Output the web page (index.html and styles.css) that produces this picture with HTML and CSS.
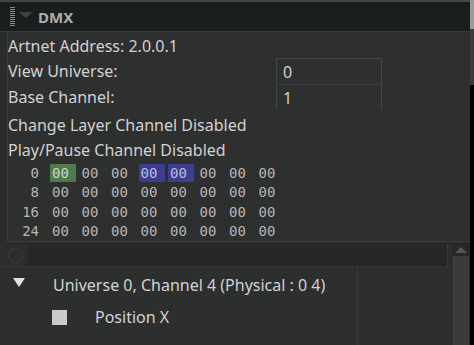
FILE: index.html
```
<!DOCTYPE html>
<html lang="en">
<head>
    <meta charset="UTF-8">
    <title>DMX</title>
    <link rel="stylesheet" href="styles.css">
</head>
<body>

<div class="window">
    <div class="main">
        <div class="header">
            <span class="grip"></span>
            <span class="caret"></span>
            <span class="title">DMX</span>
        </div>

        <div class="panel">
            <div class="row">Artnet Address: 2.0.0.1</div>
            <div class="row field-row">
                <span>View Universe:</span>
                <span class="field">0</span>
            </div>
            <div class="row field-row">
                <span>Base Channel:</span>
                <span class="field last">1</span>
            </div>
            <div class="row gap">Change Layer Channel Disabled</div>
            <div class="row">Play/Pause Channel Disabled</div>

            <div class="hex">
                <span class="lbl">0</span>
                <span class="cell sel-green">00</span><span class="cell">00</span><span class="cell">00</span><span class="cell sel-blue">00</span>
                <span class="cell sel-blue">00</span><span class="cell">00</span><span class="cell">00</span><span class="cell">00</span>
                <span class="lbl">8</span>
                <span class="cell">00</span><span class="cell">00</span><span class="cell">00</span><span class="cell">00</span>
                <span class="cell">00</span><span class="cell">00</span><span class="cell">00</span><span class="cell">00</span>
                <span class="lbl">16</span>
                <span class="cell">00</span><span class="cell">00</span><span class="cell">00</span><span class="cell">00</span>
                <span class="cell">00</span><span class="cell">00</span><span class="cell">00</span><span class="cell">00</span>
                <span class="lbl">24</span>
                <span class="cell">00</span><span class="cell">00</span><span class="cell">00</span><span class="cell">00</span>
                <span class="cell">00</span><span class="cell">00</span><span class="cell">00</span><span class="cell">00</span>
            </div>
        </div>

        <div class="lower">
            <div class="lower-body">
                <div class="search">
                    <span class="circle"></span>
                    <span class="search-input"></span>
                </div>
                <div class="tree">
                    <div class="tree-main">
                        <div class="node">
                            <span class="tri"></span>
                            <span>Universe 0, Channel 4 (Physical : 0 4)</span>
                        </div>
                        <div class="node child">
                            <span class="check"></span>
                            <span>Position X</span>
                        </div>
                    </div>
                    <div class="tree-side"></div>
                </div>
            </div>
            <div class="vscroll">
                <div class="up"><span></span></div>
                <div class="track"></div>
            </div>
        </div>
    </div>
    <div class="edge">
        <div class="thumb"></div>
        <div class="rest"></div>
    </div>
</div>

</body>
</html>
```

FILE: styles.css
```
body {
    margin: 0;
    background: #000;
    font-family: 'Noto Sans', sans-serif;
    font-size: 16px;
    color: #d2d2d2;
}
.window {
    display: flex;
    width: 474px;
    height: 345px;
    overflow: hidden;
}
.main {
    width: 470px;
    display: flex;
    flex-direction: column;
    background: #2b2c2c;
}
.header {
    height: 29px;
    border-top: 2px solid #454747;
    border-bottom: 1px solid #3a3c3c;
    background: #1a1e1e;
    display: flex;
    align-items: center;
}
.grip {
    width: 5px;
    height: 20px;
    margin-left: 10px;
    background: repeating-linear-gradient(to bottom, #8a8a8a 0 1px, transparent 1px 2px);
}
.caret {
    width: 0;
    height: 0;
    margin-left: 4px;
    border-left: 7px solid transparent;
    border-right: 7px solid transparent;
    border-top: 6px solid #3e4242;
    margin-top: -4px;
}
.title {
    margin-left: 5px;
    font-weight: bold;
    color: #acaeae;
    font-size: 15px;
}
.panel {
    margin-left: 7px;
    border-left: 1px solid #3b3c3c;
    border-bottom: 1px solid #3b3c3c;
    background: #2e2f2f;
    height: 209px;
}
.row {
    height: 25px;
    line-height: 26px;
    white-space: nowrap;
}
.row:first-child {
    height: 26px;
    line-height: 29px;
}
.field-row {
    display: flex;
    height: 26px;
}
.field-row > span:first-child {
    width: 268px;
}
.field {
    width: 98px;
    padding-left: 6px;
    border: 1px solid #444646;
    border-bottom: none;
    line-height: 26px;
}
.field.last {
    border-top-color: #3c3e3e;
}
.gap {
    margin-top: 2px;
}
.hex {
    display: grid;
    grid-template-columns: 31px repeat(8, 29.5px);
    grid-auto-rows: 19.5px;
    margin-top: 1px;
    font-family: 'DejaVu Sans Mono', monospace;
    font-size: 14px;
    color: #b6b6b6;
    align-items: center;
}
.lbl {
    text-align: right;
}
.cell {
    width: 24px;
    height: 18px;
    line-height: 18px;
    padding-left: 2px;
    margin-left: 11px;
}
.sel-green {
    background: #4f7a4d;
    color: #c8d8c6;
}
.sel-blue {
    background: #3d3f8e;
    color: #b9bbe4;
}
.lower {
    flex: 1;
    display: flex;
    margin-top: 1px;
}
.lower-body {
    flex: 1;
    display: flex;
    flex-direction: column;
}
.search {
    display: flex;
    align-items: center;
    height: 23px;
    border-bottom: 1px solid #333535;
}
.circle {
    width: 13px;
    height: 13px;
    border: 1px solid #3e4040;
    border-radius: 50%;
    margin-left: 8px;
    margin-top: 2px;
}
.search-input {
    margin-left: 5px;
    width: 419px;
    height: 22px;
    background: #262727;
    border-right: 1px solid #3a3c3c;
}
.tree {
    flex: 1;
    display: flex;
    background: #2d2e2e;
}
.tree-main {
    width: 357px;
    border-right: 1px solid #393b3b;
}
.tree-side {
    flex: 1;
}
.node {
    display: flex;
    align-items: center;
    height: 32px;
    white-space: nowrap;
}
.node:first-child {
    margin-top: 2px;
}
.tri {
    width: 0;
    height: 0;
    margin-left: 13px;
    margin-right: 28px;
    margin-top: -5px;
    border-left: 6px solid transparent;
    border-right: 6px solid transparent;
    border-top: 9px solid #e2e2e2;
}
.check {
    width: 15px;
    height: 15px;
    background: #c9caca;
    margin-left: 52px;
    margin-right: 28px;
}
.vscroll {
    width: 18px;
    display: flex;
    flex-direction: column;
    background: #2a2b2b;
}
.up {
    height: 13px;
    background: #262828;
    display: flex;
    justify-content: center;
    align-items: center;
}
.up span {
    width: 0;
    height: 0;
    border-left: 6px solid transparent;
    border-right: 6px solid transparent;
    border-bottom: 6px solid #555858;
}
.track {
    flex: 1;
    margin: 0 1px;
    background: #3a3b3b;
    border-left: 1px solid #464848;
}
.edge {
    width: 4px;
    display: flex;
    flex-direction: column;
}
.thumb {
    height: 29px;
    background: #9b9d9d;
}
.rest {
    height: 56px;
    background: #3a3b3b;
}
```
